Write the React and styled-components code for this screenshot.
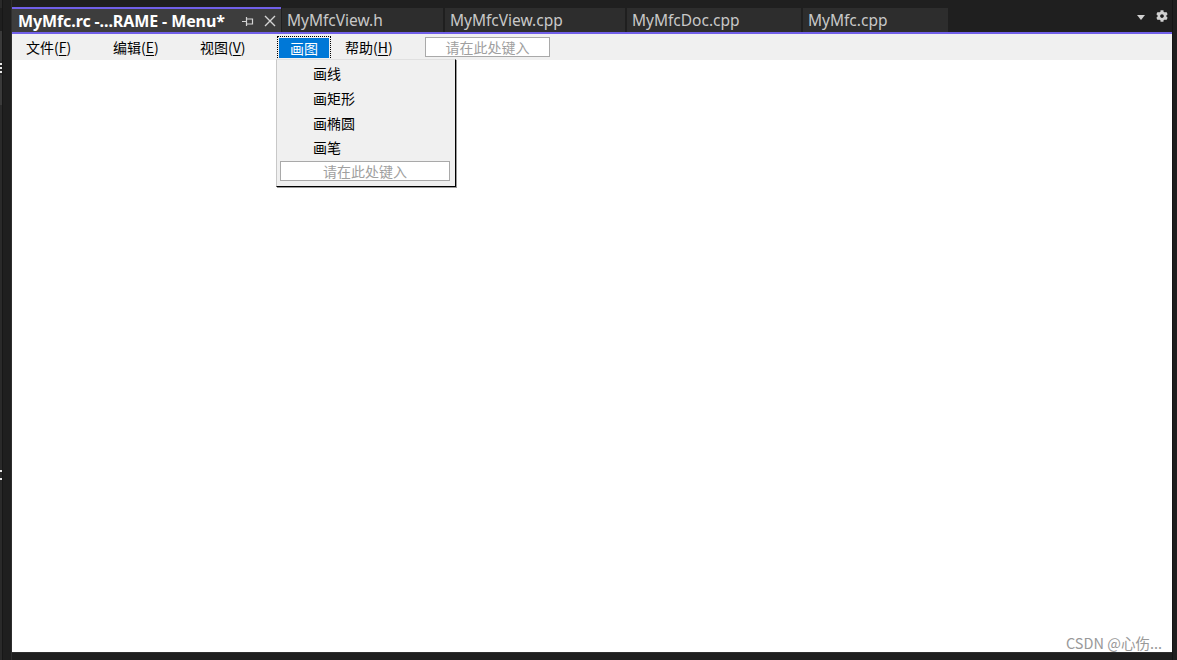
import React from 'react';
import styled, { createGlobalStyle } from 'styled-components';
import { FaCog } from 'react-icons/fa';

const GlobalStyle = createGlobalStyle`
  html, body {
    margin: 0;
    padding: 0;
    background: #1f1f1f;
    overflow: hidden;
  }
  * {
    box-sizing: border-box;
  }
`;

const Frame = styled.div`
  display: flex;
  width: 1177px;
  height: 660px;
  background: #1f1f1f;
  font-family: "Noto Sans", "Noto Sans CJK SC", sans-serif;
`;

const LeftRail = styled.div`
  width: 12px;
  display: flex;
  border-right: 1px solid #2e2e2e;
`;

const RailStrip = styled.div`
  width: 3px;
  display: flex;
  flex-direction: column;
  background: #2a2a2a;
  border-right: 1px solid #171717;
`;

const RailBlock = styled.div`
  height: ${(p) => p.$h}px;
  margin-top: ${(p) => p.$top || 0}px;
  background: ${(p) => p.$bg || '#2a2a2a'};
`;

const RailMark = styled.div`
  height: 2px;
  margin-top: 2px;
  background: #e8e8e8;
`;

const Main = styled.div`
  width: 1160px;
  display: flex;
  flex-direction: column;
`;

const TabBar = styled.div`
  height: 32px;
  display: flex;
  align-items: flex-end;
`;

const ActiveTab = styled.div`
  width: 269px;
  height: 25px;
  display: flex;
  align-items: center;
  padding-left: 6px;
  background: #3d3d3d;
  border-top: 2px solid #7160e8;
  color: #ffffff;
  font-weight: 700;
  font-size: 16px;
  white-space: nowrap;
`;

const TabTitle = styled.span`
  flex: 1;
  letter-spacing: -0.1px;
`;

const TabIcon = styled.span`
  display: flex;
  align-items: center;
  justify-content: center;
  width: 22px;
  height: 20px;
  color: #d4d4d4;
`;

const Tab = styled.div`
  width: ${(p) => p.$w}px;
  height: 24px;
  margin-left: ${(p) => p.$gap}px;
  display: flex;
  align-items: center;
  padding-left: 5px;
  background: #2d2d2d;
  color: #c8c8c8;
  font-size: 15.5px;
  white-space: nowrap;
  overflow: hidden;
`;

const TabTools = styled.div`
  margin-left: auto;
  height: 32px;
  display: flex;
  align-items: center;
  gap: 11px;
  padding-right: 4px;
  color: #d0d0d0;
`;

const Caret = styled.span`
  width: 0;
  height: 0;
  border-left: 4px solid transparent;
  border-right: 4px solid transparent;
  border-top: 5px solid #d0d0d0;
  margin-top: 3px;
`;

const AccentLine = styled.div`
  height: 2px;
  background: #7160e8;
`;

const MenuBar = styled.div`
  height: 26px;
  display: flex;
  align-items: center;
  background: #f0f0f0;
  font-family: "Noto Sans CJK SC", "Noto Sans", sans-serif;
  font-size: 14px;
  color: #000;
`;

const MenuItem = styled.div`
  width: ${(p) => p.$w}px;
  padding-left: ${(p) => p.$pad}px;
  white-space: nowrap;

  u {
    text-decoration-thickness: 1px;
    text-underline-offset: 2px;
  }
`;

const ActiveItem = styled.div`
  position: relative;
  width: 54px;
  height: 24px;
  margin-top: 2px;
  padding: 1px;
  border: 1px dotted #000;
  align-self: flex-start;
`;

const ActiveFill = styled.div`
  height: 100%;
  display: flex;
  align-items: center;
  justify-content: center;
  background: #0078d7;
  color: #fff;
`;

const TypeHere = styled.div`
  width: ${(p) => p.$w}px;
  height: ${(p) => p.$h}px;
  margin: ${(p) => p.$m || 0};
  display: flex;
  align-items: center;
  justify-content: center;
  background: #fff;
  border: 1px solid #a9a9a9;
  color: #a0a0a0;
  font-size: 14px;
`;

const Dropdown = styled.div`
  position: absolute;
  left: -2px;
  top: 22px;
  width: 180px;
  height: 128px;
  display: flex;
  flex-direction: column;
  padding-top: 1px;
  background: #f0f0f0;
  border-left: 1px solid #c8c8c8;
  border-top: 1px solid #e0e0e0;
  border-right: 1px solid #000;
  border-bottom: 1px solid #000;
  box-shadow: 1px 1px 0 #9a9a9a;
  color: #000;
  z-index: 2;
`;

const DropItem = styled.div`
  height: 24.7px;
  display: flex;
  align-items: center;
  padding-left: 36px;
  font-size: 14px;
`;

const Canvas = styled.div`
  flex: 1;
  display: flex;
  align-items: flex-end;
  justify-content: flex-end;
  padding: 0 10px 0 0;
  background: #ffffff;
`;

const Watermark = styled.span`
  font-family: "Noto Sans CJK SC", "Noto Sans", sans-serif;
  font-size: 14.5px;
  line-height: 18px;
  color: #999999;
`;

const BottomBar = styled.div`
  height: 8px;
  border-top: 1px solid #2f2f2f;
`;

const RightGap = styled.div`
  width: 5px;
  border-left: 1px solid #151515;
`;

const PinIcon = () => (
  <svg width="12" height="10" viewBox="0 0 12 10">
    <path d="M0 5.5h4M4.5 1v9M4.5 3h6v5h-6" fill="none" stroke="currentColor" strokeWidth="1.2" />
  </svg>
);

const CloseIcon = () => (
  <svg width="12" height="12" viewBox="0 0 12 12">
    <path d="M1 1l10 10M11 1L1 11" stroke="currentColor" strokeWidth="1.4" />
  </svg>
);

const menus = [
  { label: '文件', key: 'F', w: 101, pad: 14 },
  { label: '编辑', key: 'E', w: 87, pad: 0 },
  { label: '视图', key: 'V', w: 77, pad: 0 },
];

const tabs = [
  { name: 'MyMfcView.h', w: 161, gap: 1 },
  { name: 'MyMfcView.cpp', w: 180, gap: 2 },
  { name: 'MyMfcDoc.cpp', w: 174, gap: 2 },
  { name: 'MyMfc.cpp', w: 145, gap: 2 },
];

const drawItems = ['画线', '画矩形', '画椭圆', '画笔'];

const App = () => {
  return (
    <>
      <GlobalStyle />
      <Frame>
        <LeftRail>
          <RailStrip>
            <RailBlock $h={23} $top={8} $bg="#1f1f1f" />
            <RailBlock $h={30} $bg="#3a3a3a" />
            <RailMark />
            <RailMark />
            <RailMark />
            <RailBlock $h={30} $top={2} $bg="#3a3a3a" />
            <RailBlock $h={363} />
            <RailMark />
            <RailBlock $h={4} />
            <RailMark />
          </RailStrip>
        </LeftRail>
        <Main>
          <TabBar>
            <ActiveTab>
              <TabTitle>MyMfc.rc -...RAME - Menu*</TabTitle>
              <TabIcon><PinIcon /></TabIcon>
              <TabIcon><CloseIcon /></TabIcon>
            </ActiveTab>
            {tabs.map((t) => (
              <Tab key={t.name} $w={t.w} $gap={t.gap}>{t.name}</Tab>
            ))}
            <TabTools>
              <Caret />
              <FaCog size={12} />
            </TabTools>
          </TabBar>
          <AccentLine />
          <MenuBar>
            {menus.map((m) => (
              <MenuItem key={m.label} $w={m.w} $pad={m.pad}>
                {m.label}(<u>{m.key}</u>)
              </MenuItem>
            ))}
            <ActiveItem>
              <ActiveFill>画图</ActiveFill>
              <Dropdown>
                {drawItems.map((d) => (
                  <DropItem key={d}>{d}</DropItem>
                ))}
                <TypeHere $w={170} $h={20} $m="1px 0 0 3px">请在此处键入</TypeHere>
              </Dropdown>
            </ActiveItem>
            <MenuItem $w={94} $pad={14}>
              帮助(<u>H</u>)
            </MenuItem>
            <TypeHere $w={125} $h={20}>请在此处键入</TypeHere>
          </MenuBar>
          <Canvas>
            <Watermark>CSDN @心伤...</Watermark>
          </Canvas>
          <BottomBar />
        </Main>
        <RightGap />
      </Frame>
    </>
  );
};

export default App;
